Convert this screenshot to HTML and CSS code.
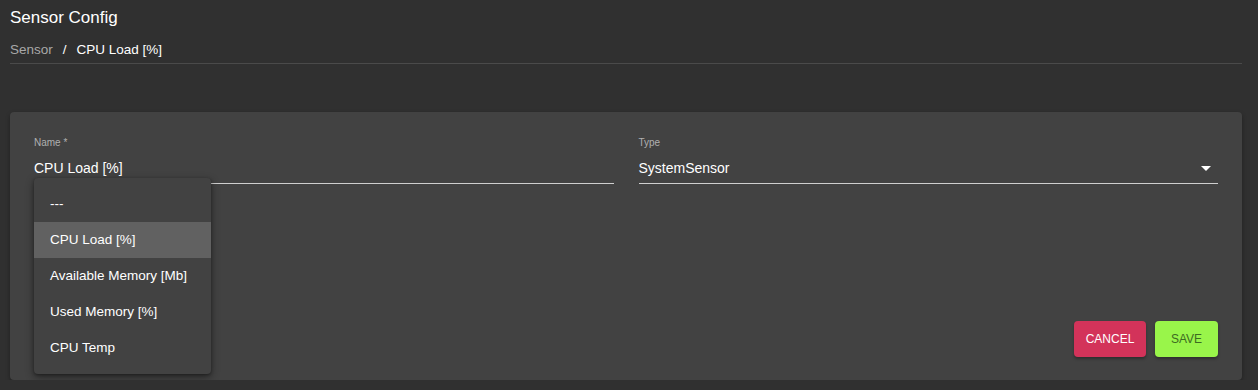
FILE: index.html
```html
<!DOCTYPE html>
<html lang="en">
<head>
    <meta charset="UTF-8">
    <meta name="viewport" content="width=device-width, initial-scale=1.0">
    <title>Sensor Config</title>
    <link rel="stylesheet" href="styles.css">
</head>
<body>
    <div class="page">
        <h1 class="title">Sensor Config</h1>
        <div class="crumbs">
            <span class="crumb-link">Sensor</span>
            <span class="crumb-sep">/</span>
            <span class="crumb-current">CPU Load [%]</span>
        </div>

        <div class="card">
            <div class="fields">
                <div class="field">
                    <label class="field-label">Name *</label>
                    <div class="field-value">CPU Load [%]</div>
                    <div class="menu">
                        <div class="menu-item">---</div>
                        <div class="menu-item active">CPU Load [%]</div>
                        <div class="menu-item">Available Memory [Mb]</div>
                        <div class="menu-item">Used Memory [%]</div>
                        <div class="menu-item">CPU Temp</div>
                    </div>
                </div>
                <div class="field">
                    <label class="field-label">Type</label>
                    <div class="field-value select">
                        <span>SystemSensor</span>
                        <span class="caret"></span>
                    </div>
                </div>
            </div>
            <div class="actions">
                <button class="btn btn-cancel">CANCEL</button>
                <button class="btn btn-save">SAVE</button>
            </div>
        </div>
    </div>
</body>
</html>
```

FILE: styles.css
```css
body {
    margin: 0;
    background-color: #303030;
    color: #fff;
    font-family: "Liberation Sans", Arial, sans-serif;
}
.page {
    padding: 4px 16px 0 10px;
}
.title {
    margin: 0;
    font-size: 17px;
    font-weight: normal;
    line-height: 28px;
}
.crumbs {
    display: flex;
    gap: 10px;
    font-size: 13.5px;
    line-height: 20px;
    padding: 8px 0 3px;
    border-bottom: 1px solid #4a4a4a;
}
.crumb-link {
    color: #a8a8a8;
}
.crumb-current {
    color: #fff;
}
.card {
    margin-top: 48px;
    background: #424242;
    border-radius: 4px;
    box-shadow: 0 2px 4px rgba(0, 0, 0, 0.35);
    padding: 24px 24px 23px;
}
.fields {
    display: grid;
    grid-template-columns: 1fr 1fr;
    gap: 25px;
}
.field {
    position: relative;
}
.field-label {
    display: block;
    font-size: 10px;
    color: #b0b0b0;
    line-height: 14px;
}
.field-value {
    display: flex;
    justify-content: space-between;
    align-items: center;
    font-size: 14px;
    line-height: 20px;
    padding: 8px 0 5px;
    border-bottom: 1px solid #cfcfcf;
}
.caret {
    width: 0;
    height: 0;
    border-left: 5px solid transparent;
    border-right: 5px solid transparent;
    border-top: 5px solid #fff;
    margin-right: 7px;
}
.menu {
    position: absolute;
    left: 0;
    top: 42px;
    width: 177px;
    padding: 8px 0;
    background: #424242;
    border-radius: 4px;
    box-shadow: 0 3px 8px rgba(0, 0, 0, 0.45), 0 1px 3px rgba(0, 0, 0, 0.3);
    z-index: 2;
}
.menu-item {
    height: 36px;
    line-height: 36px;
    padding: 0 16px;
    font-size: 13.5px;
    white-space: nowrap;
}
.menu-item.active {
    background: #616161;
}
.actions {
    display: flex;
    justify-content: flex-end;
    gap: 9px;
    margin-top: 137px;
}
.btn {
    height: 36px;
    border: none;
    border-radius: 4px;
    font-family: inherit;
    font-size: 12px;
    padding: 0;
    box-shadow: 0 2px 3px rgba(0, 0, 0, 0.3);
}
.btn-cancel {
    background: #d3335a;
    color: #fff;
    width: 72px;
}
.btn-save {
    background: #99f54a;
    color: #3d6b22;
    width: 63px;
}
```
